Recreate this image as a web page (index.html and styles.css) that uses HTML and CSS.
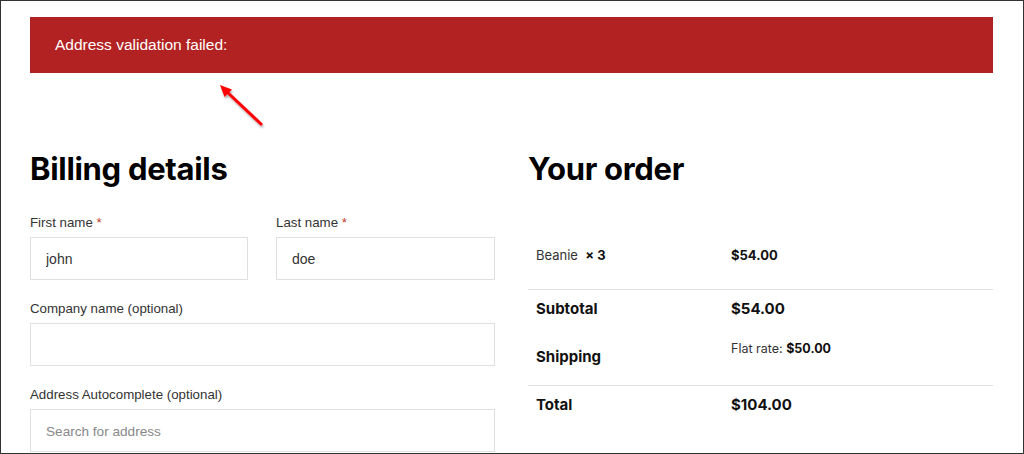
FILE: index.html
```html
<!DOCTYPE html>
<html lang="en">
<head>
<meta charset="utf-8">
<title>Checkout</title>
<link rel="stylesheet" href="styles.css">
</head>
<body>
<div class="frame">
  <div class="notice">Address validation failed:</div>

  <svg class="arrow" width="60" height="56" viewBox="0 0 60 56" aria-hidden="true">
    <defs>
      <filter id="sh" x="-30%" y="-30%" width="160%" height="160%">
        <feGaussianBlur in="SourceAlpha" stdDeviation="1.2"/>
        <feOffset dx="1" dy="2" result="b"/>
        <feComponentTransfer><feFuncA type="linear" slope="0.35"/></feComponentTransfer>
        <feMerge><feMergeNode/><feMergeNode in="SourceGraphic"/></feMerge>
      </filter>
    </defs>
    <g filter="url(#sh)">
      <line x1="50" y1="45" x2="15" y2="12" stroke="#f00" stroke-width="3" stroke-linecap="round"/>
      <polygon points="9,6 21,10.5 13.5,18" fill="#f00"/>
    </g>
  </svg>

  <div class="columns">
    <section class="billing">
      <h2 class="heading">Billing details</h2>
      <div class="pair">
        <div class="field">
          <label class="label">First name <span class="req">*</span></label>
          <input class="input" type="text" value="john">
        </div>
        <div class="field">
          <label class="label">Last name <span class="req">*</span></label>
          <input class="input" type="text" value="doe">
        </div>
      </div>
      <div class="field">
        <label class="label">Company name (optional)</label>
        <input class="input" type="text" value="">
      </div>
      <div class="field">
        <label class="label">Address Autocomplete (optional)</label>
        <input class="input" type="text" placeholder="Search for address">
      </div>
    </section>

    <section class="review">
      <h2 class="heading">Your order</h2>
      <div class="order">
        <div class="row item">
          <div class="cell name">Beanie&nbsp; <strong class="qty">× 3</strong></div>
          <div class="cell price-sm">$54.00</div>
        </div>
        <div class="row sub">
          <div class="cell th">Subtotal</div>
          <div class="cell price">$54.00</div>
        </div>
        <div class="row ship">
          <div class="cell th">Shipping</div>
          <div class="cell rate">Flat rate: <strong>$50.00</strong></div>
        </div>
        <div class="row total">
          <div class="cell th">Total</div>
          <div class="cell price">$104.00</div>
        </div>
      </div>
    </section>
  </div>
</div>
</body>
</html>
```

FILE: styles.css
```css
* { box-sizing: border-box; }

html, body {
  margin: 0;
  padding: 0;
  background: #fff;
}

.frame {
  position: relative;
  width: 1024px;
  height: 454px;
  border: 1px solid #333;
  padding: 16px 30px 0 29px;
  overflow: hidden;
  font-family: "Liberation Sans", Arial, sans-serif;
  color: #333;
}

.notice {
  height: 56px;
  background: #b22222;
  color: #fff;
  font-size: 15.5px;
  display: flex;
  align-items: center;
  padding-left: 25px;
}

.arrow {
  position: absolute;
  left: 210px;
  top: 78px;
}

.columns {
  display: grid;
  grid-template-columns: 465px 465px;
  column-gap: 33px;
  margin-top: 76px;
}

.heading {
  margin: 0;
  font-family: Inter, "Liberation Sans", sans-serif;
  font-weight: 700;
  font-size: 31px;
  line-height: 40px;
  letter-spacing: -0.3px;
  color: #000;
}

.billing .heading { margin-bottom: 24px; }

.pair {
  display: grid;
  grid-template-columns: 218px 219px;
  column-gap: 28px;
}

.field { margin-bottom: 19px; }

.label {
  display: block;
  font-size: 13.3px;
  line-height: 20px;
  margin-bottom: 4px;
  color: #333;
}

.req { color: #c0392b; }

.input {
  display: block;
  width: 100%;
  height: 43px;
  border: 1px solid #e0e0e0;
  border-radius: 0;
  padding: 0 15px;
  font-family: "Liberation Sans", Arial, sans-serif;
  font-size: 14px;
  color: #333;
  background: #fff;
  outline: none;
}

.input::placeholder { color: #888; font-size: 13.6px; }

.review .heading { margin-bottom: 32px; }

.order {
  font-family: Inter, "Liberation Sans", sans-serif;
  color: #111;
}

.row {
  display: grid;
  grid-template-columns: 195px 1fr;
  align-items: center;
}

.cell { padding-left: 8px; }

.item {
  height: 69px;
  border-bottom: 1px solid #e2e2e2;
}

.name {
  font-size: 13px;
  color: #333;
}

.qty { color: #111; font-weight: 700; }

.price-sm {
  font-size: 13px;
  font-weight: 700;
}

.sub { height: 37px; }

.ship {
  height: 59px;
  border-bottom: 1px solid #e2e2e2;
}

.th {
  font-size: 15px;
  font-weight: 700;
}

.price {
  font-size: 15px;
  font-weight: 700;
}

.rate {
  align-self: start;
  padding-top: 12px;
  font-size: 12.5px;
  line-height: 20px;
  color: #333;
}

.rate strong { color: #111; }

.total { height: 37px; }
```
